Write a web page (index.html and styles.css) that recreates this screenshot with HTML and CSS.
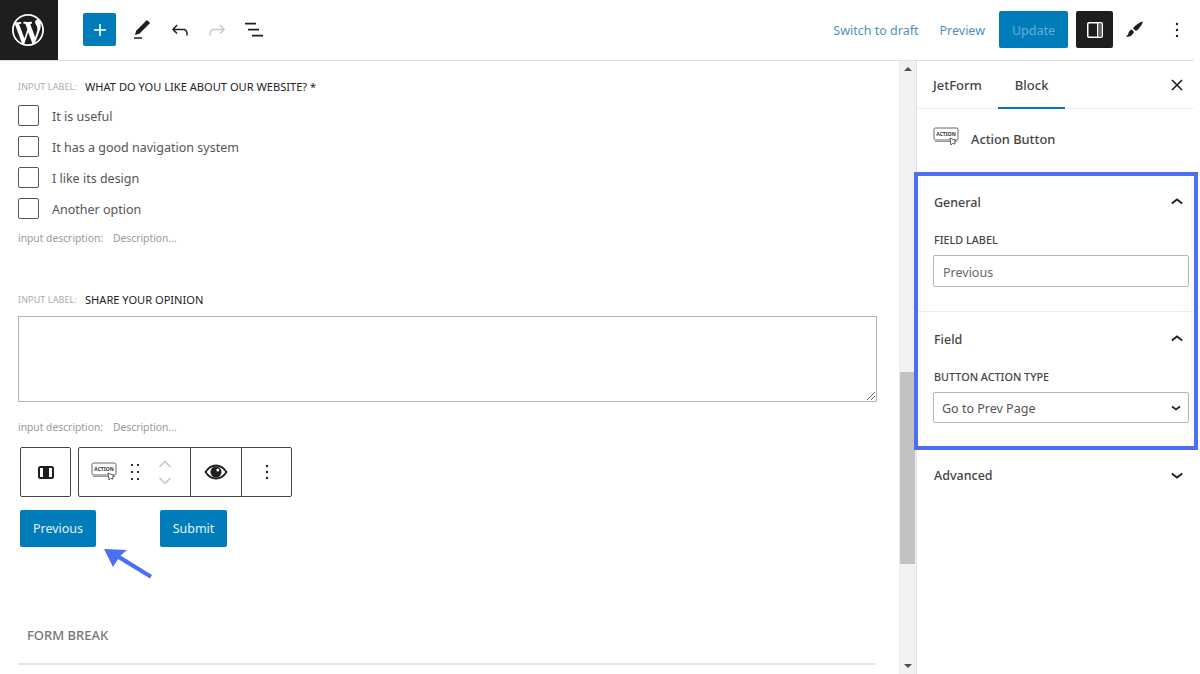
FILE: index.html
```html
<!DOCTYPE html>
<html lang="en">
<head>
<meta charset="utf-8">
<title>Edit form</title>
<link rel="stylesheet" href="styles.css">
</head>
<body>
<div class="page">
  <header class="topbar">
    <div class="logo"><svg width="32" height="32" viewBox="0 0 20 20"><path fill="#fff" d="M20 10c0-5.51-4.49-10-10-10C4.48 0 0 4.49 0 10c0 5.52 4.48 10 10 10 5.51 0 10-4.48 10-10zM7.78 15.37L4.37 6.22c.55-.02 1.17-.08 1.17-.08.5-.06.44-1.13-.06-1.11 0 0-1.45.11-2.37.11-.18 0-.37 0-.58-.01C4.12 2.69 6.87 1.11 10 1.11c2.33 0 4.45.87 6.05 2.34-.68-.11-1.65.39-1.65 1.58 0 .74.45 1.36.9 2.1.35.61.55 1.36.55 2.46 0 1.49-1.4 5-1.4 5l-3.03-8.37c.54-.02.82-.17.82-.17.5-.05.44-1.25-.06-1.22 0 0-1.44.12-2.38.12-.87 0-2.33-.12-2.33-.12-.5-.03-.56 1.2-.06 1.22l.92.08 1.26 3.41zM17.41 10c.24-.64.74-1.87.43-4.25.7 1.29 1.05 2.71 1.05 4.25 0 3.29-1.73 6.24-4.4 7.78.97-2.59 1.94-5.2 2.92-7.78zM6.1 18.09C3.12 16.65 1.11 13.53 1.11 10c0-1.3.23-2.48.72-3.59C3.25 10.3 4.67 14.2 6.1 18.09zm4.03-6.63l2.58 6.98c-.86.29-1.76.45-2.71.45-.79 0-1.57-.11-2.29-.33.81-2.38 1.62-4.74 2.42-7.1z"/></svg></div>
    <div class="tools">
      <span class="add"><svg width="24" height="24" viewBox="0 0 24 24"><path fill="#fff" d="M18 11.2h-5.2V6h-1.6v5.2H6v1.6h5.2V18h1.6v-5.2H18z"/></svg></span>
      <svg class="tool pencil" width="24" height="24" viewBox="0 0 24 24"><path fill="#1e1e1e" d="M20.1 5.1L16.900 2 6.200 12.700l-1.300 4.400 4.500-1.300L20.100 5.100zM4 20.800h8v-1.500H4v1.500z"/></svg>
      <svg class="tool undo" width="24" height="24" viewBox="0 0 24 24"><path fill="#1e1e1e" d="M18.3 11.7c-.6-.6-1.4-.9-2.3-.9H6.7l2.900-3.300-1.100-1-4.500 5L8.500 16l1-1-2.700-2.700H16c.5 0 .9.2 1.300.5 1 1 1 3.400 1 4.500v.3h1.500v-.2c0-1.500 0-4.300-1.500-5.700z"/></svg>
      <svg class="tool redo" width="24" height="24" viewBox="0 0 24 24"><path fill="#c9c9c9" d="M15.6 6.5l-1.100 1 2.900 3.300H8c-.9 0-1.700.3-2.300.9-1.400 1.500-1.400 4.200-1.400 5.600v.2h1.500v-.3c0-1.100 0-3.500 1-4.500.3-.3.7-.5 1.300-.5h9.200L14.500 15l1.100 1.100 4.600-4.600-4.600-5z"/></svg>
      <svg class="tool list" width="24" height="24" viewBox="0 0 24 24"><path fill="#1e1e1e" d="M3 4.800h11v1.600H3zM6 10.800h11v1.600H6zM10 16.800h11v1.600H10z"/></svg>
    </div>
    <div class="actions">
      <a class="link draft">Switch to draft</a>
      <a class="link preview">Preview</a>
      <span class="update">Update</span>
      <span class="panel"><svg width="24" height="24" viewBox="0 0 24 24"><path fill="#fff" fill-rule="evenodd" d="M6 4h12a2 2 0 0 1 2 2v12a2 2 0 0 1-2 2H6a2 2 0 0 1-2-2V6a2 2 0 0 1 2-2zm0 1.500a.5.5 0 0 0-.5.5v12a.5.5 0 0 0 .5.5h8v-13H6zm9.500 0v13H18a.5.5 0 0 0 .5-.5V6a.5.5 0 0 0-.5-.5h-2.500z"/><path fill="#666" d="M15.500 5.500h3v13h-3z"/></svg></span>
      <svg class="brush" width="24" height="24" viewBox="0 0 24 24"><path fill="#1e1e1e" d="M21 3.500C18 4 13 7 11 10.500l3 2.500c3-2 6-6 7-9.500zM10 11.500c-2 .5-3 1.500-3.500 3.500-.3 1.200-1 2.500-2.500 3.500 3 .7 6-.3 8-4.500z"/></svg>
      <svg class="kebab" width="24" height="24" viewBox="0 0 24 24"><circle cx="12" cy="6" r="1.200" fill="#1e1e1e"/><circle cx="12" cy="12" r="1.200" fill="#1e1e1e"/><circle cx="12" cy="18" r="1.200" fill="#1e1e1e"/></svg>
    </div>
  </header>

  <div class="body">
    <main class="editor">
      <div class="field-head"><span class="meta">INPUT LABEL:</span><span class="title">WHAT DO YOU LIKE ABOUT OUR WEBSITE? *</span></div>
      <ul class="checks">
        <li><span class="box"></span>It is useful</li>
        <li><span class="box"></span>It has a good navigation system</li>
        <li><span class="box"></span>I like its design</li>
        <li><span class="box"></span>Another option</li>
      </ul>
      <div class="desc"><span class="desc-key">input description:</span><span class="desc-val">Description...</span></div>

      <div class="field-head second"><span class="meta">INPUT LABEL:</span><span class="title">SHARE YOUR OPINION</span></div>
      <div class="textarea"><svg class="grip" width="10" height="10" viewBox="0 0 10 10"><path stroke="#666" stroke-width="1" fill="none" d="M1 9l8-8M5 9l4-4"/></svg></div>
      <div class="desc lower"><span class="desc-key">input description:</span><span class="desc-val">Description...</span></div>

      <div class="block-toolbar">
        <div class="group single"><svg width="24" height="24" viewBox="0 0 24 24"><rect x="4" y="6" width="16" height="13" rx="2.500" fill="#1e1e1e"/><path fill="#fff" d="M6 8h3v9H6zM15 8h3v9h-3z"/></svg></div>
        <div class="group wide">
          <div class="cell mover">
            <svg class="action" width="26" height="20" viewBox="0 0 26 20"><rect x="1" y="1" width="24" height="12" rx="1.500" fill="#fff" stroke="#666" stroke-width="1"/><path d="M2 14.500h22" stroke="#999"/><text x="13" y="9.300" text-anchor="middle" class="action-text">ACTION</text><path d="M17 11l1 7 1.500-1.500 2.500.5-.2-2.500 1-1z" fill="#fff" stroke="#333" stroke-width=".8"/></svg>
            <svg class="drag" width="18" height="24" viewBox="0 0 18 24"><path fill="#333" d="M5 4h2v2H5zM11 4h2v2h-2zM5 11h2v2H5zM11 11h2v2h-2zM5 18h2v2H5zM11 18h2v2h-2z"/></svg>
            <span class="updown">
              <svg width="14" height="8" viewBox="0 0 14 8"><path d="M1.500 7L7 1.500 12.500 7" fill="none" stroke="#c4c4c4" stroke-width="1.500"/></svg>
              <svg width="14" height="8" viewBox="0 0 14 8"><path d="M1.500 1L7 6.500 12.500 1" fill="none" stroke="#c4c4c4" stroke-width="1.500"/></svg>
            </span>
          </div>
          <div class="cell eye"><svg width="24" height="24" viewBox="0 0 24 24"><path fill="#fff" stroke="#1e1e1e" stroke-width="1.800" d="M1.500 12C4.500 7.500 8 5.500 12 5.500s7.500 2 10.500 6.500c-3 4.500-6.500 6.500-10.500 6.500S4.500 16.500 1.500 12z"/><circle cx="12" cy="12" r="5.500" fill="#1e1e1e"/><circle cx="13.800" cy="10" r="1.500" fill="#fff"/></svg></div>
          <div class="cell more"><svg width="24" height="24" viewBox="0 0 24 24"><circle cx="12" cy="6" r="1.200" fill="#1e1e1e"/><circle cx="12" cy="12" r="1.200" fill="#1e1e1e"/><circle cx="12" cy="18" r="1.200" fill="#1e1e1e"/></svg></div>
        </div>
      </div>

      <div class="buttons">
        <span class="btn prev">Previous</span>
        <span class="btn submit">Submit</span>
      </div>

      <div class="form-break">FORM BREAK</div>
      <div class="break-line"></div>
    </main>

    <div class="scrollbar">
      <span class="arrow up"></span>
      <div class="track"><div class="thumb"></div></div>
      <span class="arrow down"></span>
    </div>

    <aside class="sidebar">
      <div class="tabs">
        <span class="tab">JetForm</span>
        <span class="tab active">Block</span>
        <svg class="close" width="16" height="16" viewBox="0 0 16 16"><path d="M3 3l10 10M13 3L3 13" fill="none" stroke="#1e1e1e" stroke-width="1.600"/></svg>
      </div>
      <div class="card">
        <svg class="action-lg" width="26" height="20" viewBox="0 0 26 20"><rect x="1" y="1" width="24" height="12" rx="1.500" fill="#fff" stroke="#666" stroke-width="1"/><path d="M2 14.500h22" stroke="#999"/><text x="13" y="9.300" text-anchor="middle" class="action-text">ACTION</text><path d="M17 11l1 7 1.500-1.500 2.500.5-.2-2.500 1-1z" fill="#fff" stroke="#333" stroke-width=".8"/></svg>
        <span class="card-name">Action Button</span>
      </div>
      <section class="sec general">
        <div class="sec-head"><span>General</span><svg width="24" height="24" viewBox="0 0 24 24"><path fill="none" stroke="#1e1e1e" stroke-width="1.800" d="M6.800 13.500L12 9.500l5.200 4"/></svg></div>
        <label class="cap">FIELD LABEL</label>
        <div class="input">Previous</div>
      </section>
      <section class="sec field">
        <div class="sec-head"><span>Field</span><svg width="24" height="24" viewBox="0 0 24 24"><path fill="none" stroke="#1e1e1e" stroke-width="1.800" d="M6.800 13.500L12 9.500l5.200 4"/></svg></div>
        <label class="cap">BUTTON ACTION TYPE</label>
        <div class="input select">Go to Prev Page<svg width="12" height="12" viewBox="0 0 12 12"><path fill="none" stroke="#1e1e1e" stroke-width="1.600" d="M2 4.500l4 3 4-3"/></svg></div>
      </section>
      <section class="sec advanced">
        <div class="sec-head"><span>Advanced</span><svg width="24" height="24" viewBox="0 0 24 24"><path fill="none" stroke="#1e1e1e" stroke-width="1.800" d="M6.800 10.500l5.200 4 5.200-4"/></svg></div>
      </section>
    </aside>
  </div>

  <div class="highlight"></div>
  <svg class="pointer" width="52" height="34" viewBox="0 0 52 34"><path fill="#4a6ff5" d="M1 1l23 1-6.500 5.500L49 27l-2 3.500L15 11l-5 8z"/></svg>
</div>
</body>
</html>
```
FILE: styles.css
```css
* { box-sizing: border-box; }
html, body { margin: 0; padding: 0; background: #fff; }
body { font-family: "Noto Sans", "Open Sans", sans-serif; color: #444; overflow: hidden; }
.page { position: relative; width: 1200px; height: 674px; display: flex; flex-direction: column; overflow: hidden; }

.topbar { height: 61px; flex: none; display: flex; align-items: center; border-bottom: 1px solid #e0e0e0; margin-right: 6px; }
.logo { width: 58px; height: 60px; background: #1e1e1e; display: flex; align-items: center; justify-content: center; padding-right: 2px; }
.tools { display: flex; align-items: center; margin-left: 25px; }
.add { width: 33px; height: 33px; margin-top: -1px; background: #007cba; border-radius: 2px; display: flex; align-items: center; justify-content: center; }
.tool { flex: none; }
.pencil { margin-left: 14px; }
.undo { margin-left: 14px; }
.redo { margin-left: 13px; }
.list { margin-left: 13px; }
.actions { margin-left: auto; margin-right: 5px; display: flex; align-items: center; }
.link { font-size: 12.500px; color: #4c93bb; }
.preview { margin-left: 21px; }
.update { margin-left: 14px; width: 69px; height: 37px; padding-top: 2px; margin-top: -1px; background: #007cba; border-radius: 2px; color: #66afd6; font-size: 12.500px; display: flex; align-items: center; justify-content: center; }
.panel { margin-left: 8px; width: 37px; height: 37px; margin-top: -1px; background: #1e1e1e; border-radius: 2px; display: flex; align-items: center; justify-content: center; }
.brush { margin-left: 9px; flex: none; }
.kebab { margin-left: 19px; flex: none; }

.body { flex: 1; display: flex; min-height: 0; }
.editor { width: 899px; flex: none; padding: 18px 22px 0 18px; }
.field-head { height: 14px; display: flex; align-items: center; white-space: nowrap; }
.field-head.second { margin-top: 46px; }
.meta { font-size: 9px; color: #aaa; width: 67px; flex: none; letter-spacing: .1px; }
.title { font-size: 11.100px; color: #222; }
.checks { list-style: none; margin: 12px 0 0; padding: 0; }
.checks li { height: 31px; display: flex; align-items: flex-start; font-size: 12.500px; line-height: 23px; color: #555; }
.box { width: 21px; height: 21px; border: 1px solid #555; border-radius: 2px; margin-right: 13px; flex: none; }
.desc { margin-top: 1px; height: 16px; display: flex; align-items: center; font-size: 10.300px; white-space: nowrap; }
.desc-key { color: #999; width: 95px; flex: none; }
.desc-val { color: #999; }
.textarea { position: relative; margin-top: 10px; height: 86px; border: 1px solid #b4b4b4; width: 859px; }
.grip { position: absolute; right: 0; bottom: 0; }
.desc.lower { margin-top: 17px; }
.block-toolbar { margin: 12px 0 0 2px; display: flex; gap: 7px; }
.group { height: 50px; border: 1px solid #444; border-radius: 2px; display: flex; align-items: center; justify-content: center; background: #fff; }
.single { width: 51px; }
.wide { width: 214px; align-items: stretch; }
.cell { display: flex; align-items: center; justify-content: center; }
.mover { width: 111px; justify-content: flex-start; padding-left: 12px; }
.action { flex: none; }
.drag { margin-left: 9px; flex: none; }
.updown { margin-left: 14px; display: flex; flex-direction: column; gap: 9px; }
.updown svg { display: block; }
.eye { width: 51px; border-left: 1px solid #444; }
.more { flex: 1; border-left: 1px solid #444; }
.action-text { font-family: "Noto Sans", sans-serif; font-size: 5px; font-weight: 700; fill: #333; }
.buttons { margin: 13px 0 0 2px; display: flex; }
.btn { height: 37px; background: #007cba; color: #e6f2f8; font-size: 12.500px; border-radius: 2px; display: flex; align-items: center; justify-content: center; }
.prev { width: 76px; }
.submit { width: 67px; margin-left: 64px; }
.form-break { margin: 79px 0 0 9px; font-size: 13px; font-weight: 500; color: #777; line-height: 18px; }
.break-line { margin-top: 19px; height: 2px; background: #e6e6e6; width: 858px; }

.scrollbar { width: 17px; flex: none; background: #f1f1f1; display: flex; flex-direction: column; align-items: center; }
.arrow { width: 0; height: 0; border-left: 4px solid transparent; border-right: 4px solid transparent; flex: none; }
.arrow.up { border-bottom: 4px solid #505050; margin: 6px 0; }
.arrow.down { border-top: 4px solid #505050; margin: 6px 0; }
.track { flex: 1; width: 100%; padding-top: 295px; }
.thumb { height: 192px; margin: 0 1px; background: #c1c1c1; }

.sidebar { flex: none; width: 278px; border-left: 1px solid #e0e0e0; background: #fff; display: flex; flex-direction: column; }
.tabs { height: 48px; flex: none; display: flex; align-items: center; border-bottom: 1px solid #eee; font-size: 13px; font-weight: 500; color: #444; }
.tab { height: 48px; line-height: 49px; }
.tab:first-child { margin-left: 16px; }
.tab.active { margin-left: 16px; padding: 0 17px; border-bottom: 2px solid #007cba; }
.close { margin-left: auto; margin-right: 9px; }
.card { height: 63px; flex: none; display: flex; align-items: flex-start; padding: 18px 0 0 16px; }
.action-lg { flex: none; }
.card-name { margin-left: 12px; font-size: 12.800px; font-weight: 500; color: #444; line-height: 24px; }
.sec { padding: 0 5px 0 16px; border-top: 1px solid #eee; }
.general { height: 139px; border-top: 0; padding-top: 18px; }
.field { height: 138px; padding-top: 15px; }
.advanced { padding-top: 14px; border-top: 0; }
.sec-head { height: 24px; display: flex; align-items: center; justify-content: space-between; font-size: 12.500px; font-weight: 500; color: #444; }
.sec-head span { margin-left: 1px; }
.cap { display: block; margin: 18px 0 0 1px; height: 16px; font-size: 10.800px; font-weight: 500; line-height: 16px; color: #444; }
.input { margin-top: 7px; height: 32px; width: 256px; border: 1px solid #b5b5b5; border-radius: 2px; font-size: 12.500px; padding: 2px 0 0 9px; color: #666; display: flex; align-items: center; justify-content: space-between; }
.select { height: 31px; padding: 1px 6px 0 8px; color: #555; }

.highlight { position: absolute; left: 914px; top: 172px; width: 284px; height: 278px; border: 4px solid #4a6ff5; }
.pointer { position: absolute; left: 103px; top: 548px; }
```
